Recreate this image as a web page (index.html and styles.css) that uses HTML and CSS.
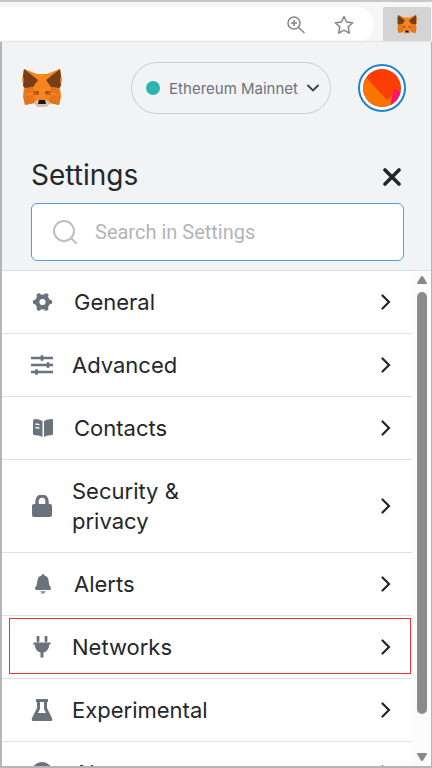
FILE: index.html
```html
<!DOCTYPE html>
<html lang="en">
<head>
<meta charset="utf-8">
<meta name="viewport" content="width=device-width, initial-scale=1">
<title>Settings</title>
<link rel="stylesheet" href="styles.css">
</head>
<body>
<svg class="defs" aria-hidden="true">
  <symbol id="fox" viewBox="0 0 40 38">
    <path fill="#f6851b" d="M2 0l13 5h10l13-5 2 11-2 8 1 7-2 10-9-2-4 4h-8l-4-4-9 2-2-10 1-7-2-8z"/>
    <path fill="#763d16" d="M2 0l14 11-5 7-8 1-2-2 1-6-1-4zM38 0L24 11l5 7 8 1 2-2-1-6 1-4z"/>
    <path fill="#e4751f" d="M1 27l10-1 2 4-1 4-9 2zM39 27l-10-1-2 4 1 4 9 2zM3 20l8-2 1 4-10 5zM37 20l-8-2-1 4 10 5z"/>
    <path fill="#cd6116" d="M11 22l5 0 1 4-6 0zM29 22l-5 0-1 4 6 0z"/>
    <path fill="#6b4a35" d="M13 23l3-1 1 3zM27 23l-3-1-1 3z"/>
    <path fill="#d7c1b3" d="M12 33l4-2h8l4 2-4 5h-8z"/>
    <path fill="#161616" d="M17 31h6l1 4h-8z"/>
  </symbol>
  <symbol id="chevron" viewBox="0 0 10 16">
    <path d="M1.500 1.500l6.500 6.500-6.500 6.500" fill="none" stroke="currentColor" stroke-width="2.200" stroke-linecap="round"/>
  </symbol>
</svg>

<header class="browser">
  <div class="address">
    <svg class="zoom" viewBox="0 0 18 18" aria-hidden="true"><g fill="none" stroke="#858585" stroke-width="1.500"><circle cx="7" cy="7" r="6"/><path d="M4 7h6M7 4v6M11.500 11.500l6 5.500"/></g></svg>
    <svg class="star" viewBox="0 0 20 20" aria-hidden="true"><path d="M10 1.500l2.600 5.500 6 .8-4.400 4.200 1.100 6.200-5.300-3-5.300 3 1.100-6.200L1.400 7.800l6-.8z" fill="none" stroke="#858585" stroke-width="1.500" stroke-linejoin="round"/></svg>
  </div>
  <button class="extension" aria-label="MetaMask"><svg viewBox="0 0 40 38"><use href="#fox"/></svg></button>
</header>

<main class="popup">
  <div class="top">
    <svg class="logo" viewBox="0 0 40 38" aria-hidden="true"><use href="#fox"/></svg>
    <button class="network">
      <span class="dot"></span>
      <span>Ethereum Mainnet</span>
      <svg viewBox="0 0 12 8" aria-hidden="true"><path d="M1 1.500l5 5 5-5" fill="none" stroke="#3a3e44" stroke-width="1.800" stroke-linecap="round"/></svg>
    </button>
    <button class="account" aria-label="Account">
      <svg viewBox="0 0 38 38"><clipPath id="disc"><circle cx="19" cy="19" r="19"/></clipPath><g clip-path="url(#disc)"><path fill="#fc3d03" d="M0 0h38v38H0z"/><path fill="#fa7500" d="M0 5l24 26 8-7-4 14H0z"/><path fill="#fb1768" d="M31 20l7 3v15H27l2-10z"/></g></svg>
    </button>
  </div>

  <div class="heading">
    <h1>Settings</h1>
    <button class="close" aria-label="Close"><svg viewBox="0 0 18 18"><path d="M2 2l14 14M16 2L2 16" stroke="#24272a" stroke-width="3.600" stroke-linecap="round"/></svg></button>
  </div>

  <label class="search">
    <svg viewBox="0 0 24 24" aria-hidden="true"><g fill="none" stroke="#bbc0c5" stroke-width="2" stroke-linecap="round"><circle cx="11" cy="11" r="10"/><path d="M18.500 18.500l4.500 4.500"/></g></svg>
    <input type="text" placeholder="Search in Settings" aria-label="Search in Settings">
  </label>

  <div class="body">
    <nav class="list">
      <a class="row inset" href="#general"><svg class="icon" viewBox="0 0 22 22" aria-hidden="true"><circle cx="11.500" cy="11" r="5.300" fill="none" stroke="currentColor" stroke-width="4.400"/><g stroke="currentColor" stroke-width="4.600" stroke-linecap="round"><path d="M4 11h1M18 11h1M7.800 4.600l.5.9M14.700 16.500l.5.900M15.200 4.600l-.5.900M8.300 16.500l-.5.900"/></g></svg><span class="label">General</span><svg class="chevron"><use href="#chevron"/></svg></a>
      <a class="row" href="#advanced"><svg class="icon" viewBox="0 0 22 22" aria-hidden="true"><path d="M0 4h22M0 11h22M0 18h22" stroke="currentColor" stroke-width="2.600"/><path d="M11 2.500v3M17 9.500v3M5.500 16.500v3" stroke="currentColor" stroke-width="3" stroke-linecap="round"/></svg><span class="label">Advanced</span><svg class="chevron"><use href="#chevron"/></svg></a>
      <a class="row inset" href="#contacts"><svg class="icon" viewBox="0 0 22 22" aria-hidden="true"><path fill="currentColor" d="M11.500 4v16C8 18.500 6 18.200 3 18q-1 0-1-1V4q0-2 2-2 4 0 7.500 2zM13 4q3-2 8-2 1 0 1 1v14q0 1-1 1c-3 .2-5 .500-8 2z"/><path d="M4.500 7l4 .6M4.500 10.500l4 .6" stroke="#fff" stroke-width="1.400"/></svg><span class="label">Contacts</span><svg class="chevron"><use href="#chevron"/></svg></a>
      <a class="row" href="#security"><svg class="icon" viewBox="0 0 22 22" aria-hidden="true"><rect x="1" y="9" width="20" height="13" rx="2" fill="currentColor"/><path d="M6 11V6a5 5 0 0 1 10 0v5" fill="none" stroke="currentColor" stroke-width="3.400"/></svg><span class="label">Security &amp; privacy</span><svg class="chevron"><use href="#chevron"/></svg></a>
      <a class="row inset" href="#alerts"><svg class="icon" viewBox="0 0 22 22" aria-hidden="true"><path fill="currentColor" d="M12 1q1.300 0 1.500 1.500 4 1.200 4.200 6 .1 4 2 5.800.8 2.700-1.200 2.700h-13q-2 0-1.200-2.700 1.900-1.800 2-5.800.2-4.800 4.200-6Q10.700 1 12 1z"/><path fill="currentColor" opacity=".7" d="M9.500 18h5q-.5 3-2.500 3t-2.500-3z"/></svg><span class="label">Alerts</span><svg class="chevron"><use href="#chevron"/></svg></a>
      <a class="row marked" href="#networks"><svg class="icon" viewBox="0 0 22 22" aria-hidden="true"><path d="M7 1v4M15 1v4" stroke="currentColor" stroke-width="2.800" stroke-linecap="round"/><path fill="currentColor" d="M3 6.500h16q.8 0 .8 1t-.8 1h-.7q-.3 6.500-5.800 8v5h-3v-5Q4 15 3.700 8.500H3q-.8 0-.8-1t.8-1z"/></svg><span class="label">Networks</span><svg class="chevron"><use href="#chevron"/></svg></a>
      <a class="row" href="#experimental"><svg class="icon" viewBox="0 0 22 22" aria-hidden="true"><path fill="currentColor" fill-rule="evenodd" d="M5 0h12v3h-1v6l5 10q1 3-2 3.500H3Q0 22 1 19L6 9V3H5zM9 3v7l-2 4h8l-2-4V3z"/></svg><span class="label">Experimental</span><svg class="chevron"><use href="#chevron"/></svg></a>
      <a class="row inset" href="#about"><svg class="icon" viewBox="0 0 22 22" aria-hidden="true"><circle cx="11" cy="10.500" r="10.500" fill="currentColor"/><path d="M11 4v3M11 9v8" stroke="#fff" stroke-width="3"/></svg><span class="label">About</span><svg class="chevron"><use href="#chevron"/></svg></a>
    </nav>
    <div class="scrollbar" aria-hidden="true">
      <svg viewBox="0 0 10 8"><path fill="#888" d="M5 0q.6 0 1 .6L10 7q0 1-1 1H1Q0 8 0 7L4 .6Q4.400 0 5 0z"/></svg>
      <div class="thumb"></div>
      <svg class="down" viewBox="0 0 10 8"><path fill="#888" d="M5 8q.6 0 1-.6L10 1q0-1-1-1H1Q0 0 0 1l4 6.400q.4.600 1 .6z"/></svg>
    </div>
  </div>
</main>
</body>
</html>
```
FILE: styles.css
```css
* { box-sizing: border-box; }

body {
  margin: 0;
  height: 100vh;
  overflow: hidden;
  display: flex;
  flex-direction: column;
  font-family: Inter, sans-serif;
  color: #24272a;
  background: #f6f6f6;
}

button {
  margin: 0;
  padding: 0;
  border: 0;
  background: none;
  font: inherit;
  color: inherit;
}

svg { display: block; flex: none; }
.defs { position: absolute; width: 0; height: 0; }

.browser {
  flex: none;
  display: flex;
  gap: 9px;
  height: 42px;
  padding: 5px 1px 0 0;
  border-top: 2px solid #c8c8c8;
}

.address {
  flex: 1;
  display: flex;
  align-items: center;
  justify-content: flex-end;
  gap: 29px;
  padding-right: 20px;
  background: #fff;
  border-radius: 0 18px 18px 0;
}
.zoom { width: 18px; height: 18px; }
.star { width: 20px; height: 20px; }

.extension {
  width: 48px;
  display: grid;
  place-items: center;
  background: #d4d4d4;
  border-radius: 2px 2px 0 0;
}
.extension svg { width: 20px; height: 19px; }

.popup {
  flex: 1;
  min-height: 0;
  display: flex;
  flex-direction: column;
  background: #f2f3f5;
  border: solid #b5b5b7;
  border-width: 0 1px 2px 2px;
  box-shadow: 0 -1px 1px #e4e4e6;
}

.top {
  flex: none;
  display: flex;
  align-items: center;
  gap: 27px;
  padding: 20px 25px 20px 20px;
}
.logo { width: 40px; height: 38px; }

.network {
  display: flex;
  align-items: center;
  gap: 9px;
  height: 52px;
  margin-left: auto;
  padding: 0 11px 0 14px;
  border: 1px solid #c8cbd0;
  border-radius: 26px;
  font-size: 15px;
  color: #6a737d;
}
.network svg { width: 12px; height: 8px; }
.dot {
  width: 14px;
  height: 14px;
  border-radius: 50%;
  background: #29b6af;
}

.account {
  width: 48px;
  height: 48px;
  padding: 3px;
  border: 2px solid #1c84d4;
  border-radius: 50%;
  background: #fff;
}
.account svg { width: 38px; height: 38px; }

.heading {
  flex: none;
  display: flex;
  align-items: center;
  justify-content: space-between;
  padding: 21px 30px 8px 29px;
}
.heading h1 {
  margin: 0;
  font-size: 28px;
  font-weight: 400;
  line-height: 40px;
}
.close { padding-top: 3px; }
.close svg { width: 18px; height: 18px; }

.search {
  flex: none;
  display: flex;
  align-items: center;
  gap: 18px;
  height: 58px;
  margin: 0 27px 9px 29px;
  padding: 0 21px;
  background: #fff;
  border: 1px solid #4f9fda;
  border-radius: 6px;
}
.search svg { width: 24px; height: 24px; }
.search input {
  flex: 1;
  min-width: 0;
  padding: 0;
  border: 0;
  outline: 0;
  background: none;
  font: 20px/28px Roboto, sans-serif;
  color: #24272a;
}
.search input::placeholder { color: #b3b4b6; opacity: 1; }

.body {
  flex: 1;
  min-height: 0;
  display: flex;
  border-top: 1px solid #dcdee1;
  background: #fff;
  overflow: hidden;
}
.list { flex: 1; }

.row {
  position: relative;
  display: flex;
  align-items: center;
  padding: 16px 21px 16px 29px;
  border-bottom: 1px solid #dfe1e3;
  font-size: 22px;
  line-height: 30px;
  color: inherit;
  text-decoration: none;
}
.icon {
  width: 22px;
  height: 22px;
  margin-right: 19px;
  color: #6a737d;
}
.inset .icon { margin-right: 21px; }
.label { max-width: 150px; }
.chevron {
  width: 10px;
  height: 16px;
  margin-left: auto;
}

.marked::after {
  content: "";
  position: absolute;
  inset: 2px 1px 4px 7px;
  border: 1px solid #f03030;
}

.scrollbar {
  flex: none;
  width: 19px;
  display: flex;
  flex-direction: column;
  align-items: center;
  gap: 8px;
  padding: 5px 0;
  background: #fcfcfc;
}
.scrollbar svg { width: 10px; height: 8px; }
.thumb {
  width: 10px;
  height: 87%;
  border-radius: 5px;
  background: #8b8b8b;
}
.down { margin-top: auto; }
```
